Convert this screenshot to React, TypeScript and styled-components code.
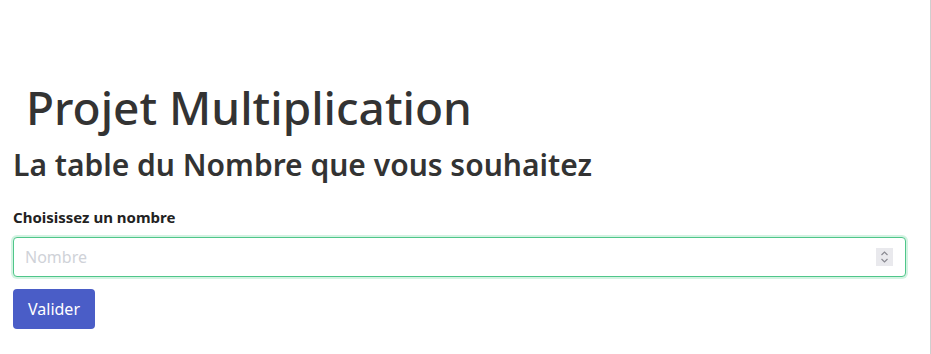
import styled, {createGlobalStyle} from "styled-components";

const GlobalStyle = createGlobalStyle`
    html, body {
        margin: 0;
        padding: 0;
        background: #ffffff;
    }
    body {
        font-family: "Noto Sans", "Open Sans", sans-serif;
        color: #333333;
    }
`;

const Page = styled.div`
    width: 930px;
    height: 354px;
    border-right: 1px solid #cfcfcf;
    box-sizing: content-box;
    overflow: hidden;
`;

const Container = styled.main`
    width: 893px;
    padding: 80px 0 0 13px;
    display: flex;
    flex-direction: column;
`;

const Title = styled.h1`
    margin: 0 0 12px 13px;
    font-size: 46px;
    font-weight: 500;
    line-height: 1.2;
    color: #333333;
`;

const Subtitle = styled.h2`
    margin: 0 0 24px;
    font-size: 30px;
    font-weight: 600;
    line-height: 1.2;
    color: #333333;
`;

const Label = styled.label`
    display: block;
    margin-bottom: 10px;
    font-size: 15px;
    font-weight: 700;
    color: #222222;
`;

const Field = styled.div`
    position: relative;
    width: 100%;
`;

const Input = styled.input`
    display: block;
    width: 100%;
    height: 40px;
    box-sizing: border-box;
    padding: 6px 11px;
    font-family: inherit;
    font-size: 16px;
    color: #333333;
    border: 1px solid #4fc68a;
    border-radius: 4px;
    box-shadow: 0 0 0 2px #d3f3e2;
    outline: none;
    -moz-appearance: textfield;

    &::placeholder {
        color: #cfd2d8;
    }

    &::-webkit-outer-spin-button,
    &::-webkit-inner-spin-button {
        -webkit-appearance: none;
        margin: 0;
    }
`;

const Spinner = styled.span`
    position: absolute;
    right: 13px;
    top: 11px;
    width: 17px;
    height: 18px;
    background: #e9e9ed;
    display: flex;
    align-items: center;
    justify-content: center;
    pointer-events: none;
`;

const Button = styled.button`
    margin-top: 12px;
    align-self: flex-start;
    width: 82px;
    height: 40px;
    padding: 0;
    border: none;
    border-radius: 4px;
    background: #4a5dc7;
    color: #ffffff;
    font-family: inherit;
    font-size: 16px;
    cursor: pointer;
`;

export default function App() {
    return (
        <>
            <GlobalStyle/>
            <Page>
                <Container>
                    <Title>Projet Multiplication</Title>
                    <Subtitle>La table du Nombre que vous souhaitez</Subtitle>
                    <Label htmlFor="nombre">Choisissez un nombre</Label>
                    <Field>
                        <Input id="nombre" type="number" placeholder="Nombre" autoFocus/>
                        <Spinner>
                            <svg width="9" height="14" viewBox="0 0 9 14" fill="none" stroke="#8a8a92" strokeWidth="1.2">
                                <path d="M1.5 5 L4.5 2 L7.5 5"/>
                                <path d="M1.5 9 L4.5 12 L7.5 9"/>
                            </svg>
                        </Spinner>
                    </Field>
                    <Button type="button">Valider</Button>
                </Container>
            </Page>
        </>
    );
}
